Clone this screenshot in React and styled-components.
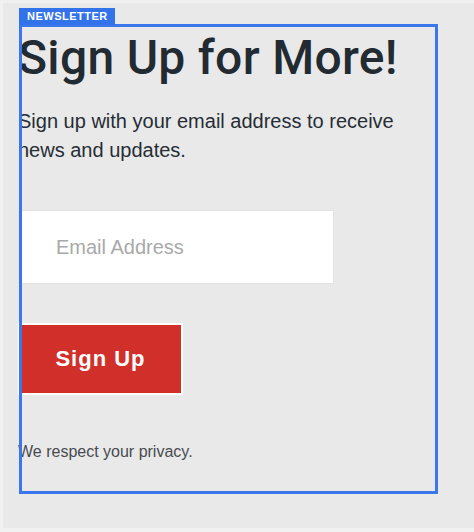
import React from "react";
import styled, { createGlobalStyle } from "styled-components";

const GlobalStyle = createGlobalStyle`
  html, body {
    margin: 0;
    padding: 0;
    background: #f1f1f1;
  }
  * {
    box-sizing: border-box;
  }
`;

const Page = styled.div`
  position: relative;
  height: 532px;
  background: #e9e9e9;
  border-left: 3px solid #f1f1f1;
  border-top: 3px solid #f0f0f0;
  border-bottom: 4px solid #f1f1f1;
  font-family: "Liberation Sans", Arial, sans-serif;
`;

const Signup = styled.section`
  display: flex;
  flex-direction: column;
  align-items: flex-start;
  padding: 28px 0 0 15px;
`;

const Title = styled.h1`
  margin: 0;
  font-family: Roboto, "Liberation Sans", sans-serif;
  font-size: 48px;
  line-height: 54px;
  font-weight: 500;
  letter-spacing: 0.3px;
  color: #222a32;
`;

const Lead = styled.p`
  margin: 22px 0 0;
  width: 400px;
  font-size: 20px;
  line-height: 29px;
  color: #262d35;
`;

const EmailInput = styled.input`
  margin-top: 45px;
  width: 316px;
  height: 74px;
  padding: 0 0 0 37px;
  border: 1px solid #e3e3e3;
  background: #fff;
  font-family: inherit;
  font-size: 20px;
  color: #333;
  outline: none;

  &::placeholder {
    color: #a9a9a9;
  }
`;

const SubmitButton = styled.button`
  margin-top: 39px;
  width: 165px;
  height: 72px;
  border: 2px solid #fff;
  background: #d1302a;
  color: #fff;
  font-family: inherit;
  font-size: 22px;
  font-weight: 700;
  letter-spacing: 1px;
  cursor: pointer;
`;

const Note = styled.p`
  margin: 45px 0 0;
  font-size: 16px;
  line-height: 24px;
  color: #474b50;
`;

const Highlight = styled.div`
  position: absolute;
  left: 16px;
  top: 21px;
  width: 419px;
  height: 470px;
  border: 3px solid #3a77ec;
  pointer-events: none;
`;

const Tag = styled.span`
  position: absolute;
  left: 16px;
  top: 5px;
  width: 96px;
  height: 17px;
  padding-left: 8px;
  background: #3373ea;
  color: #fff;
  font-size: 11px;
  line-height: 17px;
  font-weight: 700;
  letter-spacing: 0.5px;
`;

const App = () => {
  return (
    <>
      <GlobalStyle />
      <Page>
        <Signup>
          <Title>Sign Up for More!</Title>
          <Lead>Sign up with your email address to receive news and updates.</Lead>
          <EmailInput type="email" placeholder="Email Address" />
          <SubmitButton type="button">Sign Up</SubmitButton>
          <Note>We respect your privacy.</Note>
        </Signup>
        <Highlight />
        <Tag>NEWSLETTER</Tag>
      </Page>
    </>
  );
};

export default App;
